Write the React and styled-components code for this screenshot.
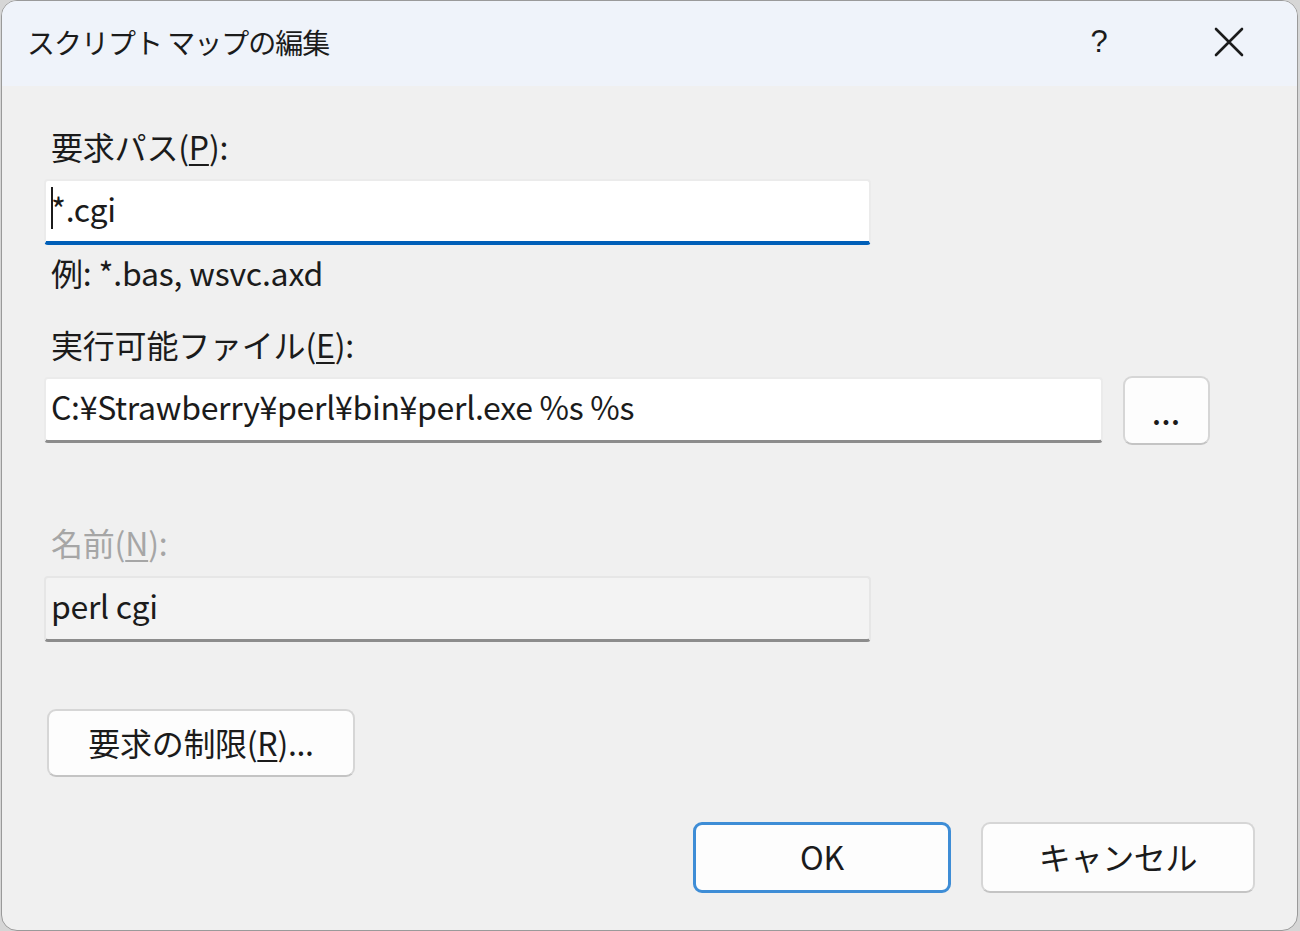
import React from "react";
import styled, { createGlobalStyle } from "styled-components";

const Global = createGlobalStyle`
  html, body {
    margin: 0;
    padding: 0;
    height: 931px;
    overflow: hidden;
    background: #d6d6d6;
  }
  body {
    font-family: "Noto Sans CJK JP", "Noto Sans", sans-serif;
    color: #1b1b1b;
  }
`;

const Window = styled.div`
  box-sizing: border-box;
  margin-left: 1px;
  width: 1297px;
  height: 931px;
  border: 1px solid #9a9a9a;
  border-radius: 16px;
  overflow: hidden;
  background: #f0f0f0;
  display: flex;
  flex-direction: column;
`;

const TitleBar = styled.div`
  height: 85px;
  flex: none;
  background: #eff3fa;
  display: flex;
  align-items: center;
  padding-left: 25px;
  padding-bottom: 4px;
  box-sizing: border-box;
`;

const Title = styled.div`
  flex: 1;
  font-size: 28px;
  line-height: 40px;
  letter-spacing: -1px;
  color: #1b1b1b;
`;

const TitleButton = styled.div`
  width: ${(p) => p.$w}px;
  height: 56px;
  margin-left: ${(p) => p.$ml || 0}px;
  margin-right: ${(p) => p.$mr || 0}px;
  display: flex;
  align-items: center;
  justify-content: center;
  font-family: "Liberation Sans", sans-serif;
  font-size: 31px;
  color: #1b1b1b;
`;

const Body = styled.div`
  flex: 1;
  display: flex;
  flex-direction: column;
  align-items: flex-start;
  padding: 40px 42px 0 42px;
`;

const Label = styled.div`
  font-size: 32px;
  line-height: 40px;
  margin-left: 7px;
  margin-top: ${(p) => p.$mt || 0}px;
  color: ${(p) => (p.$disabled ? "#a6a6a6" : "#1b1b1b")};
  letter-spacing: -0.2px;
`;

const U = styled.span`
  text-decoration: underline;
  text-underline-offset: 4px;
  text-decoration-thickness: 2px;
`;

const Input = styled.div`
  box-sizing: border-box;
  width: ${(p) => p.$w}px;
  height: 66px;
  margin-top: ${(p) => p.$mt || 0}px;
  background: ${(p) => (p.$disabled ? "#f3f3f3" : "#ffffff")};
  border: 2px solid ${(p) => (p.$disabled ? "#e6e6e6" : "#ebebeb")};
  border-bottom: ${(p) => (p.$focus ? "4px solid #005fb8" : "3px solid #8c8c8c")};
  border-radius: 4px;
  display: flex;
  align-items: center;
  padding-left: 5px;
  padding-bottom: 7px;
  font-size: 32px;
  line-height: 40px;
  color: #1b1b1b;
  letter-spacing: -0.3px;
  white-space: nowrap;
`;

const Caret = styled.span`
  display: inline-block;
  width: 2px;
  height: 42px;
  background: #1b1b1b;
  margin-right: -2px;
  position: relative;
  z-index: 1;
`;

const Row = styled.div`
  display: flex;
  align-items: flex-start;
  gap: 20px;
  margin-top: ${(p) => p.$mt || 0}px;
`;

const Button = styled.div`
  box-sizing: border-box;
  width: ${(p) => p.$w}px;
  height: ${(p) => p.$h}px;
  margin-top: ${(p) => p.$mt || 0}px;
  margin-left: ${(p) => p.$ml || 0}px;
  background: #fdfdfd;
  border: ${(p) => (p.$primary ? "3px solid #3e8dd6" : "2px solid #d6d6d6")};
  border-bottom-color: ${(p) => (p.$primary ? "#3e8dd6" : "#c4c4c4")};
  border-radius: 9px;
  display: flex;
  align-items: center;
  justify-content: center;
  padding-bottom: 3px;
  font-size: 32px;
  line-height: 40px;
  color: #1b1b1b;
  letter-spacing: -0.3px;
`;

const Dots = styled.span`
  font-size: 26px;
  line-height: 26px;
  padding-top: 10px;
  font-weight: 700;
  letter-spacing: 1px;
`;

const Footer = styled.div`
  align-self: stretch;
  display: flex;
  justify-content: flex-end;
  gap: 30px;
  margin-top: 45px;
`;

export default function App() {
  return (
    <>
      <Global />
      <Window>
        <TitleBar>
          <Title>スクリプト マップの編集</Title>
          <TitleButton $w={60}>?</TitleButton>
          <TitleButton $w={68} $ml={66} $mr={34}>
            <svg width="30" height="30" viewBox="0 0 30 30">
              <path d="M2 2 L28 28 M28 2 L2 28" stroke="#1b1b1b" strokeWidth="2.6" strokeLinecap="round" />
            </svg>
          </TitleButton>
        </TitleBar>
        <Body>
          <Label>
            要求パス(<U>P</U>):
          </Label>
          <Input $w={827} $mt={13} $focus>
            <Caret />
            *.cgi
          </Input>
          <Label $mt={7}>例: *.bas, wsvc.axd</Label>
          <Label $mt={32}>
            実行可能ファイル(<U>E</U>):
          </Label>
          <Row $mt={13}>
            <Input $w={1059}>C:¥Strawberry¥perl¥bin¥perl.exe %s %s</Input>
            <Button $w={87} $h={69} $mt={-1}>
              <Dots>...</Dots>
            </Button>
          </Row>
          <Label $mt={77} $disabled>
            名前(<U>N</U>):
          </Label>
          <Input $w={827} $mt={14} $disabled>
            perl cgi
          </Input>
          <Button $w={308} $h={68} $mt={67} $ml={3}>
            要求の制限(<U>R</U>)...
          </Button>
          <Footer>
            <Button $w={258} $h={71} $primary>
              OK
            </Button>
            <Button $w={274} $h={71}>
              キャンセル
            </Button>
          </Footer>
        </Body>
      </Window>
    </>
  );
}
